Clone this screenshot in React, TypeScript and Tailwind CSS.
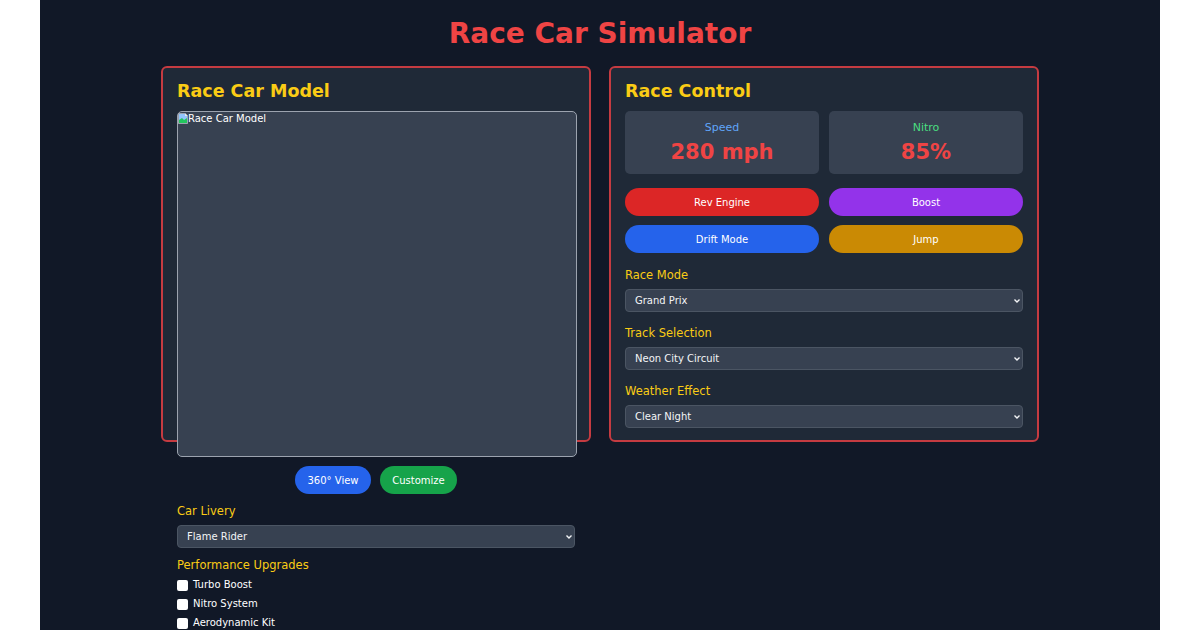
import React from 'react';

const font = { fontFamily: '"DejaVu Sans", Verdana, sans-serif' };

// Chromium's broken-image glyph, drawn small
const BrokenImage: React.FC = () => (
  <svg width="10" height="11" viewBox="0 0 10 11" className="mt-[1px] shrink-0">
    <path d="M0.5 0.5h7l2 2v8h-9z" fill="#e5e7eb" stroke="#9ca3af" strokeWidth="1" />
    <path d="M1 1h6v2h2v4H1z" fill="#93c5fd" />
    <path d="M1 10V7l3-2 2 2 3-2v5z" fill="#22c55e" />
  </svg>
);

const Field: React.FC<{ label: string; value: string; options: string[] }> = ({ label, value, options }) => (
  <div className="flex flex-col gap-[6px]">
    <span className="text-[11.5px] leading-[16px] text-[#facc15]">{label}</span>
    <div className="relative">
      <select
        defaultValue={value}
        className="block h-[23px] w-full appearance-none rounded-[4px] border border-[#4b5563] bg-[#374151] pl-[9px] text-[10px] text-[#f3f4f6] outline-none"
        style={font}
      >
        {options.map((o) => (
          <option key={o}>{o}</option>
        ))}
      </select>
      <svg
        width="6"
        height="4"
        viewBox="0 0 6 4"
        className="pointer-events-none absolute right-[3px] top-[10px]"
      >
        <path d="M0.5 0.5L3 3l2.5-2.5" fill="none" stroke="#f3f4f6" strokeWidth="1.4" />
      </svg>
    </div>
  </div>
);

const Stat: React.FC<{ label: string; value: string; color: string }> = ({ label, value, color }) => (
  <div className="flex h-[63px] flex-col items-center rounded-[5px] bg-[#374151] pt-[10px]">
    <span className={`text-[11px] leading-[14px] ${color}`}>{label}</span>
    <span className="mt-[4px] text-[21px] font-bold leading-[26px] text-[#ef4444]">{value}</span>
  </div>
);

const PillButton: React.FC<{ label: string; bg: string }> = ({ label, bg }) => (
  <button className={`h-[28px] w-full rounded-full text-[10px] text-white ${bg}`} style={font}>
    {label}
  </button>
);

export default function App() {
  const upgrades = ['Turbo Boost', 'Nitro System', 'Aerodynamic Kit'];

  return (
    <div className="min-h-[630px] bg-white" style={font}>
      <div className="mx-auto min-h-[660px] max-w-[1120px] bg-[#111827] pt-[17px]">
        <h1 className="text-center text-[28px] font-bold leading-[34px] text-[#ef4444]">Race Car Simulator</h1>

        <div className="mt-[15px] flex justify-center gap-[18px]">
          {/* Car model card: the viewer and options spill past the fixed card height */}
          <div className="h-[376px] w-[430px] rounded-[6px] border-2 border-[#c53b41] bg-[#1f2937] px-[14px] pt-[14px]">
            <h2 className="mb-[11px] text-[17.5px] font-bold leading-[18px] text-[#facc15]">Race Car Model</h2>
            <div className="flex h-[346px] w-[400px] items-start rounded-[5px] border border-[#9ca3af] bg-[#374151]">
              <div className="flex items-start">
                <BrokenImage />
                <span className="text-[10px] leading-[13px] text-white">Race Car Model</span>
              </div>
            </div>

            <div className="mt-[9px] flex justify-center gap-[9px]">
              <button className="h-[28px] w-[76px] rounded-full bg-[#2563eb] text-[10px] text-white" style={font}>
                360° View
              </button>
              <button className="h-[28px] w-[77px] rounded-full bg-[#16a34a] text-[10px] text-white" style={font}>
                Customize
              </button>
            </div>

            <div className="mt-[9px]">
              <Field label="Car Livery" value="Flame Rider" options={['Flame Rider', 'Midnight Blue', 'Neon Green']} />
            </div>

            <div className="mt-[9px] text-[11.5px] leading-[16px] text-[#facc15]">Performance Upgrades</div>
            <div className="mt-[6px] flex flex-col gap-[7px]">
              {upgrades.map((u) => (
                <label key={u} className="flex items-center gap-[5px] text-[10px] leading-[12px] text-white">
                  <span className="h-[11px] w-[11px] rounded-[2px] bg-white" />
                  {u}
                </label>
              ))}
            </div>
          </div>

          {/* Race control card */}
          <div className="h-[376px] w-[430px] rounded-[6px] border-2 border-[#c53b41] bg-[#1f2937] px-[14px] pt-[14px]">
            <h2 className="mb-[11px] text-[17.5px] font-bold leading-[18px] text-[#facc15]">Race Control</h2>

            <div className="grid grid-cols-2 gap-[10px]">
              <Stat label="Speed" value="280 mph" color="text-[#60a5fa]" />
              <Stat label="Nitro" value="85%" color="text-[#4ade80]" />
            </div>

            <div className="mt-[14px] grid grid-cols-2 gap-x-[10px] gap-y-[9px]">
              <PillButton label="Rev Engine" bg="bg-[#dc2626]" />
              <PillButton label="Boost" bg="bg-[#9333ea]" />
              <PillButton label="Drift Mode" bg="bg-[#2563eb]" />
              <PillButton label="Jump" bg="bg-[#ca8a04]" />
            </div>

            <div className="mt-[14px] flex flex-col gap-[13px]">
              <Field label="Race Mode" value="Grand Prix" options={['Grand Prix', 'Time Trial', 'Drag Race']} />
              <Field
                label="Track Selection"
                value="Neon City Circuit"
                options={['Neon City Circuit', 'Desert Canyon', 'Mountain Pass']}
              />
              <Field label="Weather Effect" value="Clear Night" options={['Clear Night', 'Rain', 'Fog']} />
            </div>
          </div>
        </div>
      </div>
    </div>
  );
}
